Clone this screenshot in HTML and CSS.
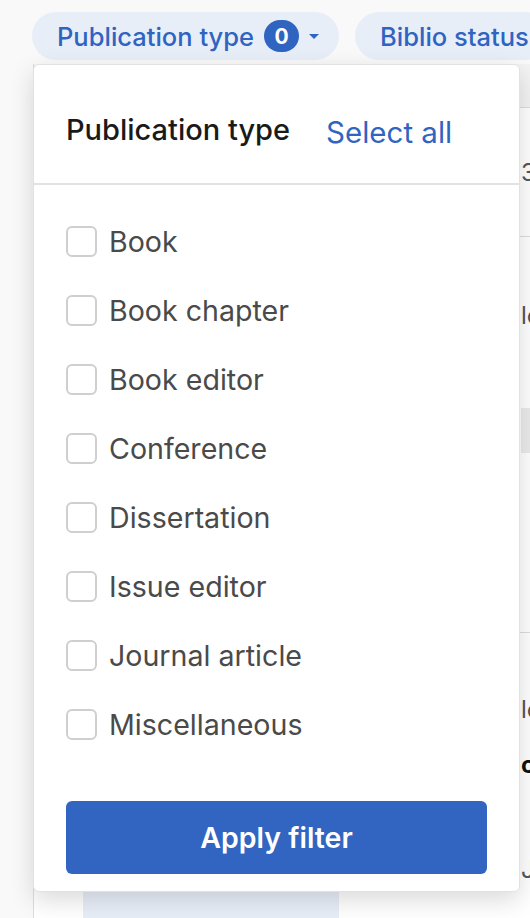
FILE: index.html
```html
<!DOCTYPE html>
<html lang="en">
<head>
    <meta charset="UTF-8">
    <meta name="viewport" content="width=device-width, initial-scale=1.0">
    <title>Publications</title>
    <link rel="stylesheet" href="styles.css">
</head>
<body>
    <div class="filters">
        <button class="filter-pill">
            Publication type
            <span class="filter-count">0</span>
            <span class="caret"></span>
        </button>
        <button class="filter-pill">Biblio status</button>
    </div>

    <div class="results">
        <div class="results-head"></div>
        <div class="result result-count">
            <div class="result-body">32 publications</div>
        </div>
        <div class="result result-tall">
            <div class="result-body">
                <div class="result-line">lorem ipsum</div>
                <div class="result-tag">type</div>
            </div>
        </div>
        <div class="result result-last">
            <div class="result-thumb"></div>
            <div class="result-body">
                <div class="result-line">lorem ipsum</div>
                <div class="result-title">conference paper</div>
                <div class="result-line">J. Doe</div>
            </div>
        </div>
    </div>

    <div class="dropdown">
        <div class="dropdown-head">
            <span class="dropdown-title">Publication type</span>
            <a class="select-all" href="#">Select all</a>
        </div>
        <div class="dropdown-body">
            <label class="option"><input type="checkbox"><span>Book</span></label>
            <label class="option"><input type="checkbox"><span>Book chapter</span></label>
            <label class="option"><input type="checkbox"><span>Book editor</span></label>
            <label class="option"><input type="checkbox"><span>Conference</span></label>
            <label class="option"><input type="checkbox"><span>Dissertation</span></label>
            <label class="option"><input type="checkbox"><span>Issue editor</span></label>
            <label class="option"><input type="checkbox"><span>Journal article</span></label>
            <label class="option"><input type="checkbox"><span>Miscellaneous</span></label>
            <button class="apply-btn">Apply filter</button>
        </div>
    </div>
</body>
</html>
```

FILE: styles.css
```css
* {
    margin: 0;
    padding: 0;
    box-sizing: border-box;
    font-family: 'Inter', 'Noto Sans', sans-serif;
}

body {
    background: #f9f9f9;
    width: 530px;
    height: 918px;
    overflow: hidden;
    position: relative;
}

.filters {
    display: flex;
    gap: 16px;
    padding: 12px 0 0 32px;
    white-space: nowrap;
}

.filter-pill {
    display: flex;
    align-items: center;
    height: 48px;
    padding: 0 20px 0 25px;
    border: none;
    border-radius: 24px;
    background: #e8eef8;
    color: #2f64c1;
    font-size: 25.5px;
    font-weight: 500;
    flex-shrink: 0;
}

.filter-count {
    display: inline-flex;
    align-items: center;
    justify-content: center;
    width: 35px;
    height: 32px;
    margin-left: 10px;
    border-radius: 16px;
    background: #2f64c1;
    color: #ffffff;
    font-size: 21px;
    font-weight: 700;
}

.caret {
    width: 0;
    height: 0;
    margin-left: 10px;
    border-left: 5px solid transparent;
    border-right: 5px solid transparent;
    border-top: 5px solid #2f64c1;
}

/* list behind the dropdown */
.results {
    margin: 4px 0 0 33px;
    height: 854px;
    overflow: hidden;
    background: #ffffff;
    border-left: 1px solid #dddddd;
    white-space: nowrap;
    color: #555555;
    font-size: 24px;
}

.results-head {
    height: 44px;
    background: #f3f3f3;
    border-bottom: 1px solid #dddddd;
}

.result {
    display: grid;
    grid-template-columns: 49px 256px 1fr;
    border-bottom: 1px solid #dddddd;
}

.result-body {
    grid-column: 3;
    padding-left: 182px;
}

.result-count {
    height: 129px;
    padding-top: 50px;
}

.result-tall {
    height: 396px;
    padding-top: 64px;
}

.result-tag {
    display: inline-block;
    margin-top: 78px;
    padding: 8px 10px;
    background: #ebebeb;
}

.result-last {
    height: 285px;
    padding-top: 62px;
    border-bottom: none;
}

.result-thumb {
    grid-column: 2;
    grid-row: 1;
    height: 200px;
    margin-top: 100px;
    background: #e8eef8;
}

.result-last .result-body {
    grid-row: 1;
}

.result-title {
    margin: 26px 0 76px;
    color: #111111;
    font-weight: 700;
}

/* dropdown */
.dropdown {
    position: absolute;
    top: 64px;
    left: 33px;
    width: 487px;
    background: #ffffff;
    border: 1px solid #e2e2e2;
    border-radius: 6px;
    box-shadow: 0 8px 24px rgba(0, 0, 0, 0.15);
}

.dropdown-head {
    display: flex;
    align-items: center;
    gap: 36px;
    height: 120px;
    padding: 10px 32px 0;
    border-bottom: 2px solid #e2e2e2;
}

.dropdown-title {
    font-size: 29px;
    font-weight: 500;
    color: #1a1a1a;
}

.select-all {
    margin-top: 6px;
    font-size: 29.5px;
    color: #2f64c1;
    text-decoration: none;
}

.dropdown-body {
    padding: 22px 32px 17px;
}

.option {
    display: flex;
    align-items: center;
    gap: 12px;
    height: 69px;
    font-size: 28.6px;
    color: #4a4a4a;
}

.option input {
    appearance: none;
    flex-shrink: 0;
    width: 31px;
    height: 31px;
    border: 2px solid #cfcfcf;
    border-radius: 6px;
    background: #ffffff;
}

.apply-btn {
    display: block;
    width: 100%;
    height: 73px;
    margin-top: 42px;
    border: none;
    border-radius: 6px;
    background: #3165c1;
    color: #ffffff;
    font-size: 28.5px;
    font-weight: 600;
}
```
